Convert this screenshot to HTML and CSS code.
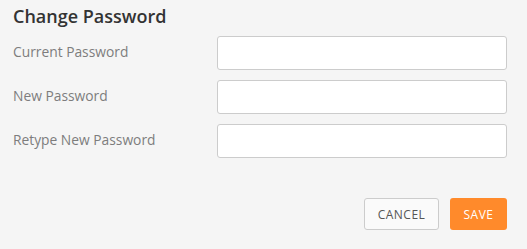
FILE: index.html
```html
<!DOCTYPE html>
<html>
<head>
<meta charset="utf-8">
<link rel="stylesheet" href="styles.css">
</head>
<body>
<div class="panel">
  <h2 class="title">Change Password</h2>
  <div class="form">
    <div class="row">
      <label class="label">Current Password</label>
      <input class="field" type="password">
    </div>
    <div class="row">
      <label class="label">New Password</label>
      <input class="field" type="password">
    </div>
    <div class="row">
      <label class="label">Retype New Password</label>
      <input class="field" type="password">
    </div>
  </div>
  <div class="actions">
    <button class="btn btn-cancel">CANCEL</button>
    <button class="btn btn-save">SAVE</button>
  </div>
</div>
</body>
</html>
```
FILE: styles.css
```css
html, body {
  margin: 0;
  padding: 0;
  background: #f5f5f5;
}
body {
  font-family: "Open Sans", sans-serif;
  width: 527px;
  height: 249px;
  overflow: hidden;
}
.panel {
  padding: 3px 20px 0 13px;
}
.title {
  margin: 0;
  font-size: 18px;
  font-weight: 600;
  color: #333;
  line-height: 26px;
}
.form {
  display: flex;
  flex-direction: column;
  gap: 10px;
  margin-top: 7px;
}
.row {
  display: flex;
  align-items: center;
}
.label {
  width: 204px;
  font-size: 13.8px;
  color: #7d7d7d;
  margin-bottom: 3px;
}
.field {
  box-sizing: border-box;
  width: 290px;
  height: 34px;
  margin: 0;
  border: 1px solid #ccc;
  border-radius: 3px;
  background: #fff;
  outline: none;
}
.actions {
  display: flex;
  justify-content: flex-end;
  gap: 11px;
  margin-top: 40px;
}
.btn {
  box-sizing: border-box;
  height: 32px;
  border-radius: 3px;
  font-family: "Open Sans", sans-serif;
  font-size: 12px;
  letter-spacing: 0.5px;
  padding: 0;
  cursor: pointer;
}
.btn-cancel {
  width: 75px;
  background: #fafafa;
  border: 1px solid #ccc;
  color: #555;
}
.btn-save {
  width: 57px;
  background: #ff8a2b;
  border: none;
  color: #fff;
}
```
